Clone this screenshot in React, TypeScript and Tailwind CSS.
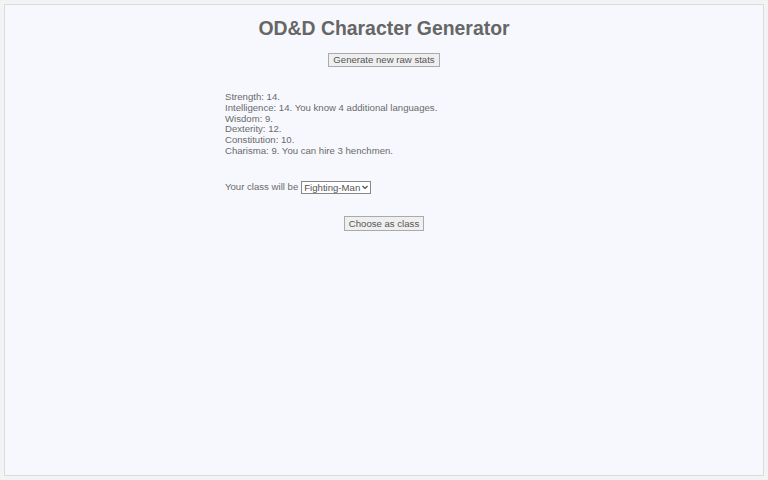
import { useState } from 'react';

const stats = [
    'Strength: 14.',
    'Intelligence: 14. You know 4 additional languages.',
    'Wisdom: 9.',
    'Dexterity: 12.',
    'Constitution: 10.',
    'Charisma: 9. You can hire 3 henchmen.',
];

export default function App() {
    const [cls, setCls] = useState('Fighting-Man');

    return (
        <div className="h-[480px] bg-[#f3f3f5] p-[4px] font-['Liberation_Sans',Arial,sans-serif]">
            <div className="h-full border border-[#dcdcdc] bg-[#f7f8fd] pt-[11px]">
                <h1 className="text-center text-[19.4px] font-bold leading-[24px] text-[#666]">
                    OD&amp;D Character Generator
                </h1>

                <div className="mt-[13px] flex justify-center">
                    <button className="h-[14px] border border-[#aaa] bg-[#efefef] px-[4px] text-[9.6px] leading-[12px] text-[#555]">
                        Generate new raw stats
                    </button>
                </div>

                <div className="mx-auto mt-[25px] w-[318px] text-[9.6px] leading-[10.8px] text-[#6a6a6a]">
                    {stats.map((line) => (
                        <div key={line}>{line}</div>
                    ))}

                    <div className="mt-[24px] flex items-center gap-[3px]">
                        <span>Your class will be</span>
                        {/* native select with a small chevron drawn over it */}
                        <div className="relative">
                            <select
                                value={cls}
                                onChange={(e) => setCls(e.target.value)}
                                className="block h-[13px] w-[70px] appearance-none border border-[#888] bg-white pl-[2px] text-[9.6px] leading-[11px] text-[#555]"
                            >
                                <option>Fighting-Man</option>
                                <option>Magic-User</option>
                                <option>Cleric</option>
                            </select>
                            <svg
                                className="pointer-events-none absolute right-[3px] top-[4px]"
                                width="6"
                                height="5"
                                viewBox="0 0 6 5"
                            >
                                <path d="M0.5 1 L3 3.5 L5.5 1" fill="none" stroke="#444" strokeWidth="1.1" />
                            </svg>
                        </div>
                    </div>

                    <div className="mt-[22px] flex justify-center">
                        <button className="h-[15px] border border-[#aaa] bg-[#efefef] px-[4px] text-[9.6px] leading-[13px] text-[#555]">
                            Choose as class
                        </button>
                    </div>
                </div>
            </div>
        </div>
    );
}
